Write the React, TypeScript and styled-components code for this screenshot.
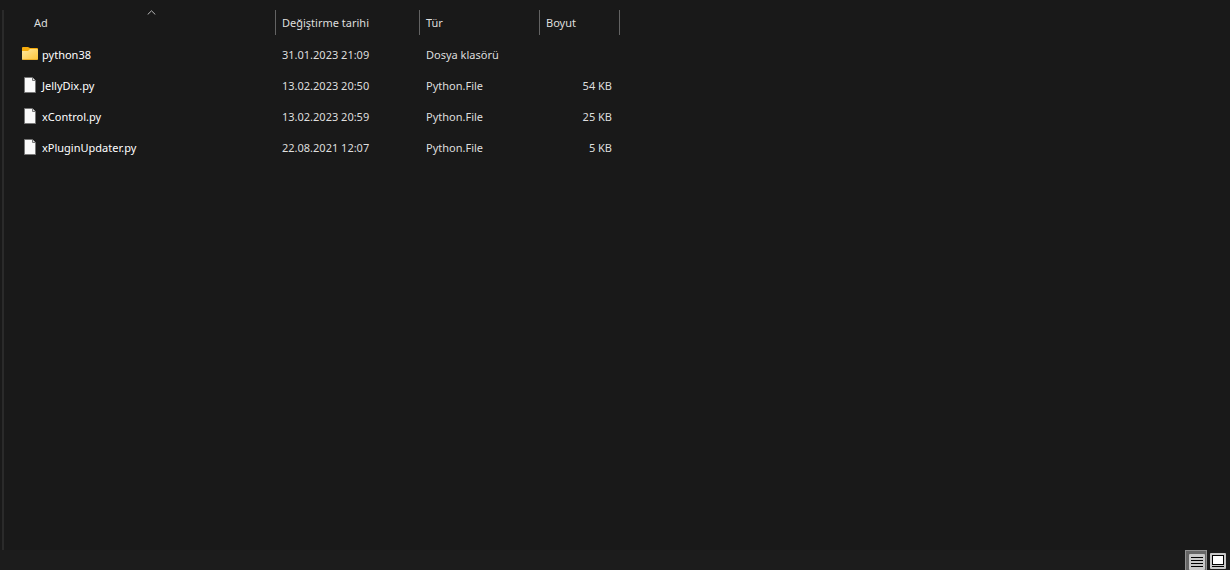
import React from 'react';
import styled, { createGlobalStyle, css } from 'styled-components';

const GlobalStyle = createGlobalStyle`
  * { box-sizing: border-box; }
  body {
    margin: 0;
    background: #191919;
    color: #dedede;
    font-family: 'Noto Sans', 'Open Sans', sans-serif;
    font-size: 11px;
    line-height: 16px;
  }
`;

const Window = styled.div`
  display: flex;
  flex-direction: column;
  min-height: 100vh;
`;

const Content = styled.main`
  flex: 1;
  margin-top: 10px;
  padding-left: 2px;
  display: flex;
`;

const ListPane = styled.div`
  flex: 1;
  border-left: 2px solid #2a2a2a;
`;

const FileTable = styled.table`
  table-layout: fixed;
  width: 616px;
  border-collapse: collapse;
`;

const Column = styled.col<{ $width: number }>`
  width: ${(p) => p.$width}px;
`;

const HeaderCell = styled.th<{ $first?: boolean }>`
  padding: 0 0 4px ${(p) => (p.$first ? 24 : 0)}px;
  font-weight: 400;
`;

const HeaderButton = styled.button`
  position: relative;
  display: block;
  width: 100%;
  height: 25px;
  padding: 0 6px;
  border: 0;
  border-right: 1px solid #636363;
  background: none;
  color: inherit;
  font: inherit;
  text-align: left;
  white-space: nowrap;
`;

const SortArrow = styled.svg`
  position: absolute;
  top: 0;
  left: 50%;
  margin-left: -5px;
`;

const Cell = styled.td<{ $right?: boolean }>`
  height: 31px;
  padding: 0 8px 0 6px;
  text-align: ${(p) => (p.$right ? 'right' : 'left')};
  white-space: nowrap;
`;

const NameCell = styled(Cell)`
  padding-left: 18px;
  color: #fff;
`;

const Name = styled.span`
  display: flex;
  align-items: center;
  gap: 4px;
`;

const ItemIcon = styled.svg`
  flex: none;
  margin-bottom: 1px;
`;

const StatusBar = styled.footer`
  display: flex;
  justify-content: flex-end;
  gap: 1px;
  height: 20px;
  padding-right: 2px;
  background: #1c1c1c;
  overflow: hidden;
`;

const ViewButton = styled.button<{ $active?: boolean }>`
  display: flex;
  justify-content: center;
  width: 20px;
  height: 22px;
  padding: 2px 0 0;
  border: 1px solid transparent;
  background: none;
  ${(p) =>
    p.$active &&
    css`
      width: 22px;
      padding: 3px 0 0 2px;
      border-color: #919191;
      background: #666;
    `}
`;

const FolderIcon = () => (
  <ItemIcon width="16" height="16" viewBox="0 0 16 16" aria-hidden="true">
    <defs>
      <linearGradient id="folder" x1="0" y1="0" x2="1" y2="1">
        <stop offset="0" stopColor="#ffe8a0" />
        <stop offset="1" stopColor="#fcc436" />
      </linearGradient>
    </defs>
    <path d="M0 2Q0 1 1 1H6L8 2H15Q16 2 16 3V8H0Z" fill="#f5ab0c" />
    <path d="M0 5H6L8 3H15Q16 3 16 4V13Q16 14 15 14H1Q0 14 0 13Z" fill="url(#folder)" />
    <path d="M1 13.5H15" stroke="#eeb02a" />
  </ItemIcon>
);

const FileIcon = () => (
  <ItemIcon width="16" height="16" viewBox="0 0 16 16" aria-hidden="true">
    <path d="M2.5 .5H10L13.5 4V15.5H2.5Z" fill="#fafafa" stroke="#777" />
    <path d="M10.5 .5V3.5H13.5" fill="#ddd" stroke="#777" />
  </ItemIcon>
);

const DetailsIcon = () => (
  <svg width="16" height="16" viewBox="0 0 16 16" aria-hidden="true">
    <rect width="16" height="16" rx="1" fill="#c8c8c8" />
    <path d="M2 3.5H14M2 6.5H14M2 9.5H14M2 12.5H14" stroke="#000" />
  </svg>
);

const ThumbnailIcon = () => (
  <svg width="16" height="16" viewBox="0 0 16 16" aria-hidden="true">
    <rect width="16" height="16" rx="1" fill="#c8c8c8" />
    <rect x="2.5" y="2.5" width="11" height="9" fill="#fff" stroke="#000" />
    <path d="M2 13.5H14" stroke="#000" />
  </svg>
);

const columns = [
  { label: 'Ad', width: 272 },
  { label: 'Değiştirme tarihi', width: 144 },
  { label: 'Tür', width: 120 },
  { label: 'Boyut', width: 80 },
];

const files = [
  { name: 'python38', date: '31.01.2023 21:09', type: 'Dosya klasörü', size: '', folder: true },
  { name: 'JellyDix.py', date: '13.02.2023 20:50', type: 'Python.File', size: '54 KB' },
  { name: 'xControl.py', date: '13.02.2023 20:59', type: 'Python.File', size: '25 KB' },
  { name: 'xPluginUpdater.py', date: '22.08.2021 12:07', type: 'Python.File', size: '5 KB' },
];

export default function App() {
  return (
    <Window>
      <GlobalStyle />
      <Content>
        <ListPane>
          <FileTable>
            <colgroup>
              {columns.map((c) => (
                <Column key={c.label} $width={c.width} />
              ))}
            </colgroup>
            <thead>
              <tr>
                {columns.map((c, i) => (
                  <HeaderCell key={c.label} $first={i === 0} aria-sort={i === 0 ? 'ascending' : undefined}>
                    <HeaderButton type="button">
                      {c.label}
                      {i === 0 && (
                        <SortArrow width="9" height="5" viewBox="0 0 9 5" aria-hidden="true">
                          <path d="M.7 4.5L4.5 .8L8.3 4.5" fill="none" stroke="#b8b8b8" />
                        </SortArrow>
                      )}
                    </HeaderButton>
                  </HeaderCell>
                ))}
              </tr>
            </thead>
            <tbody>
              {files.map((f) => (
                <tr key={f.name}>
                  <NameCell>
                    <Name>
                      {f.folder ? <FolderIcon /> : <FileIcon />}
                      {f.name}
                    </Name>
                  </NameCell>
                  <Cell>{f.date}</Cell>
                  <Cell>{f.type}</Cell>
                  <Cell $right>{f.size}</Cell>
                </tr>
              ))}
            </tbody>
          </FileTable>
        </ListPane>
      </Content>
      <StatusBar>
        <ViewButton type="button" $active aria-pressed="true" aria-label="Ayrıntılar">
          <DetailsIcon />
        </ViewButton>
        <ViewButton type="button" aria-pressed="false" aria-label="Büyük simgeler">
          <ThumbnailIcon />
        </ViewButton>
      </StatusBar>
    </Window>
  );
}
